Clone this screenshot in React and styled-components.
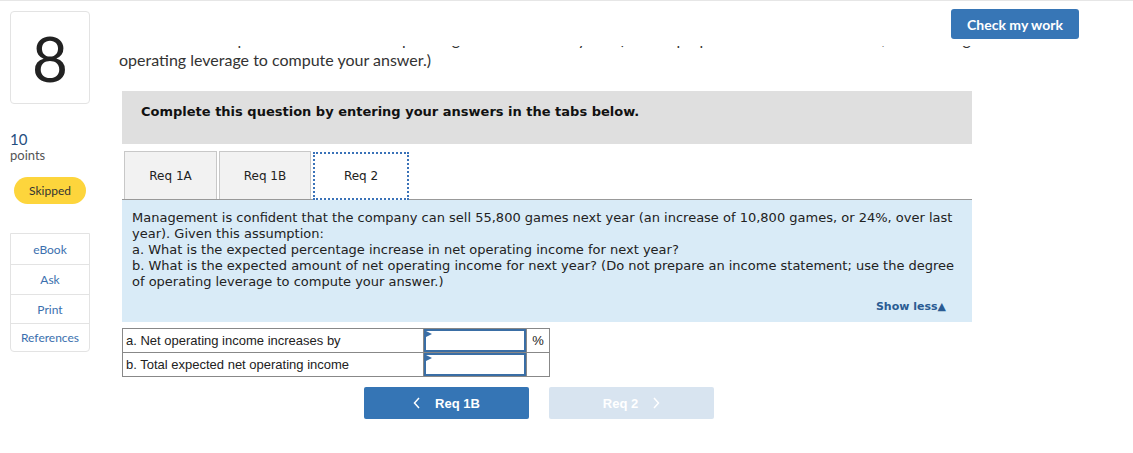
import React from "react";
import styled, { createGlobalStyle } from "styled-components";

const GlobalStyle = createGlobalStyle`
  body {
    margin: 0;
    background: #fff;
    font-family: Lato, "Open Sans", sans-serif;
    color: #333;
  }
`;

const Page = styled.div`
  display: flex;
  width: 1133px;
  height: 453px;
  border-top: 1px solid #e6e6e6;
  box-sizing: border-box;
  overflow: hidden;
`;

const Sidebar = styled.div`
  width: 100px;
  flex-shrink: 0;
  padding: 10px 0 0 10px;
  box-sizing: border-box;
  display: flex;
  flex-direction: column;
`;

const NumberBox = styled.div`
  width: 80px;
  height: 93px;
  box-sizing: border-box;
  border: 1px solid #e3e3e3;
  border-radius: 4px;
  display: flex;
  align-items: center;
  justify-content: center;
  font-size: 62px;
  color: #222;
  font-family: Lato, sans-serif;
`;

const Points = styled.div`
  margin-top: 27px;
  font-size: 15px;
  line-height: 16px;
  color: #1f4e80;
`;

const PointsLabel = styled.div`
  font-size: 13px;
  line-height: 16px;
  color: #555;
`;

const Pill = styled.div`
  margin: 14px 0 0 4px;
  width: 72px;
  height: 27px;
  border-radius: 14px;
  background: #fdd53c;
  color: #333;
  font-size: 12px;
  display: flex;
  align-items: center;
  justify-content: center;
`;

const Tools = styled.div`
  margin-top: 29px;
  width: 80px;
  border: 1px solid #e3e3e3;
  border-radius: 0 0 4px 4px;
  box-sizing: border-box;
`;

const ToolLink = styled.div`
  height: ${(p) => p.h}px;
  box-sizing: border-box;
  display: flex;
  align-items: center;
  justify-content: center;
  font-size: 12px;
  color: #3b6fae;
  border-top: ${(p) => (p.first ? "none" : "1px solid #e3e3e3")};
`;

const Main = styled.div`
  position: relative;
  flex: 1;
  padding: 0 0 0 19px;
`;

const Header = styled.div`
  position: absolute;
  top: 0;
  left: 0;
  right: 0;
  height: 45px;
  background: #fff;
  display: flex;
  justify-content: flex-end;
  align-items: flex-start;
  padding: 8px 54px 0 0;
  box-sizing: border-box;
  z-index: 2;
`;

const CheckButton = styled.button`
  width: 128px;
  height: 30px;
  border: none;
  border-radius: 3px;
  background: #3776b6;
  color: #fff;
  font-family: Lato, sans-serif;
  font-weight: 700;
  font-size: 14px;
  cursor: pointer;
`;

const Question = styled.div`
  width: 900px;
  margin-top: 27px;
  font-size: 16px;
  line-height: 21px;
  color: #333;
`;

const Prompt = styled.div`
  margin: 21px 0 0 3px;
  width: 850px;
  height: 53px;
  background: #dfdfdf;
  padding: 13px 0 0 19px;
  box-sizing: border-box;
  font-family: "DejaVu Sans", Verdana, sans-serif;
  font-weight: 700;
  font-size: 13px;
  color: #111;
`;

const TabRow = styled.div`
  margin: 7px 0 0 3px;
  width: 850px;
  display: flex;
  gap: 2px;
  padding-left: 2px;
  box-sizing: border-box;
  border-bottom: 1px solid #999;
  align-items: flex-end;
`;

const Tab = styled.div`
  width: ${(p) => p.w}px;
  height: 48px;
  box-sizing: border-box;
  display: flex;
  align-items: center;
  justify-content: center;
  font-family: "DejaVu Sans", Verdana, sans-serif;
  font-size: 12px;
  color: #222;
  background: ${(p) => (p.active ? "#fff" : "#f2f2f2")};
  border: ${(p) => (p.active ? "2px dotted #3a72b8" : "1px solid #c8c8c8")};
  border-bottom: ${(p) => (p.active ? "2px dotted #3a72b8" : "none")};
  margin-bottom: ${(p) => (p.active ? "-1px" : "0")};
`;

const Panel = styled.div`
  margin-left: 3px;
  width: 850px;
  height: 122px;
  background: #d9ebf7;
  padding: 10px 10px 0 10px;
  box-sizing: border-box;
  display: flex;
  flex-direction: column;
`;

const PanelText = styled.div`
  font-family: "DejaVu Sans", Verdana, sans-serif;
  font-size: 13px;
  line-height: 16px;
  color: #222;
`;

const ShowLess = styled.div`
  margin-top: auto;
  margin-bottom: 9px;
  align-self: flex-end;
  margin-right: 16px;
  font-family: "DejaVu Sans", Verdana, sans-serif;
  font-weight: 700;
  font-size: 11px;
  color: #2a5b93;
`;

const AnswerTable = styled.table`
  margin: 6px 0 0 3px;
  border-collapse: collapse;
  font-family: "Liberation Sans", Arial, sans-serif;
  font-size: 13px;
  color: #222;

  td {
    border: 1px solid #888;
    height: 23px;
    padding: 0;
  }
`;

const LabelCell = styled.td`
  width: 297px;
  padding-left: 3px !important;
`;

const InputCell = styled.td`
  width: 102px;
`;

const Input = styled.div`
  height: 23px;
  border: 2px solid #3a6ea5;
  box-sizing: border-box;
  background: #fff;
  position: relative;

  &::before {
    content: "";
    position: absolute;
    left: 0;
    top: 0;
    border-left: 6px solid #3a6ea5;
    border-top: 3px solid transparent;
    border-bottom: 3px solid transparent;
  }
`;

const UnitCell = styled.td`
  width: 22px;
  text-align: center;
`;

const NavRow = styled.div`
  margin: 10px 0 0 245px;
  display: flex;
  gap: 20px;
`;

const NavButton = styled.div`
  width: 165px;
  height: 32px;
  border-radius: 2px;
  background: ${(p) => (p.disabled ? "#d8e4f0" : "#3575b5")};
  color: #fff;
  display: flex;
  align-items: center;
  justify-content: center;
  gap: 14px;
  font-family: "Liberation Sans", Arial, sans-serif;
  font-weight: 700;
  font-size: 13px;
`;

const Chevron = ({ dir }) => (
  <svg width="8" height="12" viewBox="0 0 8 12" fill="none">
    <path
      d={dir === "left" ? "M6 1L1.5 6L6 11" : "M2 1L6.5 6L2 11"}
      stroke="#fff"
      strokeWidth="1.5"
    />
  </svg>
);

export default function App() {
  return (
    <>
      <GlobalStyle />
      <Page>
        <Sidebar>
          <NumberBox>8</NumberBox>
          <Points>10</Points>
          <PointsLabel>points</PointsLabel>
          <Pill>Skipped</Pill>
          <Tools>
            <ToolLink first h={30}>eBook</ToolLink>
            <ToolLink h={30}>Ask</ToolLink>
            <ToolLink h={29}>Print</ToolLink>
            <ToolLink h={28}>References</ToolLink>
          </Tools>
        </Sidebar>
        <Main>
          <Header>
            <CheckButton>Check my work</CheckButton>
          </Header>
          <Question>
            2. What is the expected amount of net operating income for next year? (Do not prepare an income statement; use the degree of
            operating leverage to compute your answer.)
          </Question>
          <Prompt>Complete this question by entering your answers in the tabs below.</Prompt>
          <TabRow>
            <Tab w={93}>Req 1A</Tab>
            <Tab w={92}>Req 1B</Tab>
            <Tab w={96} active>Req 2</Tab>
          </TabRow>
          <Panel>
            <PanelText>
              Management is confident that the company can sell 55,800 games next year (an increase of 10,800 games, or 24%, over last
              year). Given this assumption:
              <br />
              a. What is the expected percentage increase in net operating income for next year?
              <br />
              b. What is the expected amount of net operating income for next year? (Do not prepare an income statement; use the degree
              of operating leverage to compute your answer.)
            </PanelText>
            <ShowLess>Show less▲</ShowLess>
          </Panel>
          <AnswerTable>
            <tbody>
              <tr>
                <LabelCell>a. Net operating income increases by</LabelCell>
                <InputCell><Input /></InputCell>
                <UnitCell>%</UnitCell>
              </tr>
              <tr>
                <LabelCell>b. Total expected net operating income</LabelCell>
                <InputCell><Input /></InputCell>
                <UnitCell></UnitCell>
              </tr>
            </tbody>
          </AnswerTable>
          <NavRow>
            <NavButton>
              <Chevron dir="left" />
              Req 1B
            </NavButton>
            <NavButton disabled>
              Req 2
              <Chevron dir="right" />
            </NavButton>
          </NavRow>
        </Main>
      </Page>
    </>
  );
}
